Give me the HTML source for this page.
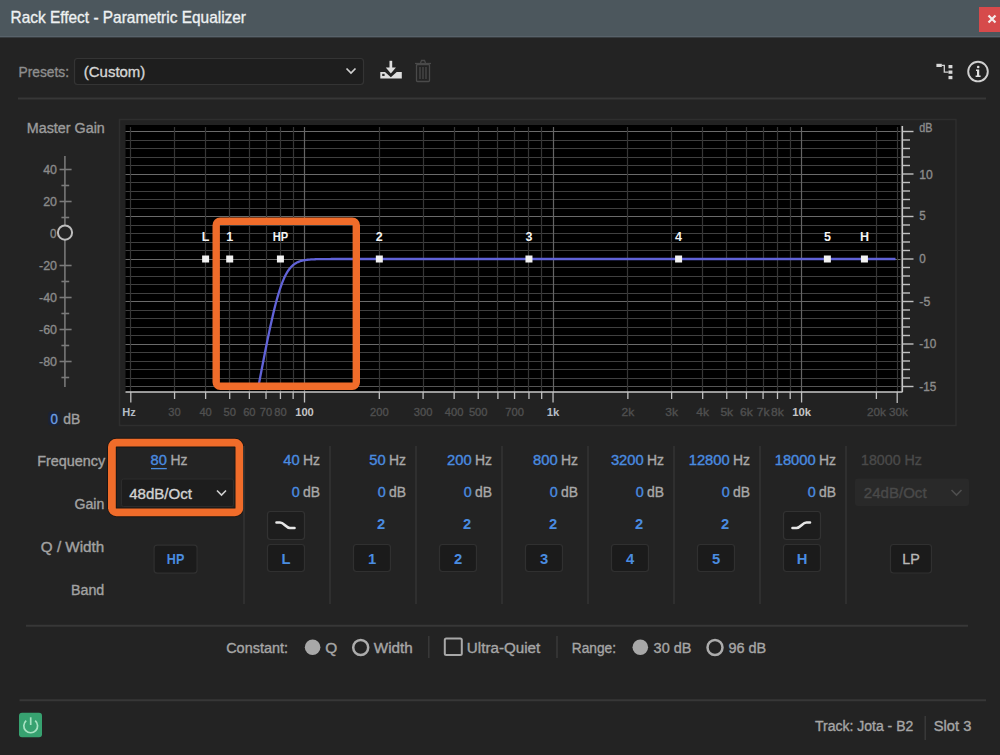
<!DOCTYPE html>
<html><head><meta charset="utf-8"><title>Rack Effect - Parametric Equalizer</title>
<style>
html,body{margin:0;padding:0;background:#232323;width:1000px;height:755px;overflow:hidden}
svg{display:block;font-family:"Liberation Sans", sans-serif}
</style></head><body>
<svg width="1000" height="755" viewBox="0 0 1000 755">
<rect width="1000" height="755" fill="#232323"/>
<rect x="0" y="0" width="1000" height="37.5" fill="#4c575d"/>
<line x1="0" y1="36.5" x2="1000" y2="36.5" stroke="#58626a" stroke-width="1.2"/>
<text x="10.5" y="23.4" font-size="17" fill="#eef1f2" stroke="#eef1f2" stroke-width="0.35" textLength="235.5" lengthAdjust="spacingAndGlyphs">Rack Effect - Parametric Equalizer</text>
<rect x="979" y="7" width="21" height="25" fill="#d64a4b"/>
<path d="M988.5 15.5 L995.5 22.5 M995.5 15.5 L988.5 22.5" stroke="#f4eaea" stroke-width="2.2"/>
<text x="18.5" y="76.7" font-size="15" fill="#8e8e8e" stroke="#8e8e8e" stroke-width="0.35" textLength="50.5" lengthAdjust="spacingAndGlyphs">Presets:</text>
<rect x="74.5" y="58.5" width="289" height="26" fill="#1e1e1e" stroke="#343434" stroke-width="1.2" rx="3"/>
<text x="83.8" y="76.7" font-size="15" fill="#d6d6d6" stroke="#d6d6d6" stroke-width="0.35" textLength="61.5" lengthAdjust="spacingAndGlyphs">(Custom)</text>
<path d="M346.5 68.5 L351 73 L355.5 68.5" stroke="#d0d0d0" stroke-width="1.7" fill="none"/>
<g fill="#dedede"><rect x="389.5" y="60.8" width="2.7" height="7.5"/><path d="M385.8 67.4 L395.9 67.4 L390.85 73.6Z"/><path d="M380.3 72 L385 72 L390.85 77.2 L396.7 72 L401.8 72 L401.8 78.6 L380.3 78.6Z"/></g><rect x="382.2" y="73.8" width="2.4" height="2.2" fill="#2a2a2a"/>
<g stroke="#4a4a4a" stroke-width="1.3" fill="none"><rect x="416.5" y="64.5" width="13" height="17" rx="1"/><line x1="415" y1="63.5" x2="431" y2="63.5"/><path d="M420.5 63 L421.5 60.5 L424.5 60.5 L425.5 63"/><line x1="420" y1="67" x2="420" y2="79"/><line x1="423" y1="67" x2="423" y2="79"/><line x1="426" y1="67" x2="426" y2="79"/></g>
<g fill="#d8d8d8"><rect x="936.4" y="63.8" width="5.4" height="3.2"/><rect x="948.5" y="65" width="3.9" height="3.3"/><rect x="948.5" y="70.5" width="3.9" height="3.3"/><rect x="948.5" y="75.9" width="3.9" height="3.3"/></g><path d="M941.5 65.4 L944.3 65.4 L944.3 72.1 L948.5 72.1" stroke="#d0d0d0" stroke-width="1.3" fill="none"/>
<circle cx="978" cy="71.6" r="9.8" stroke="#d0d0d0" stroke-width="1.9" fill="none"/><circle cx="978.2" cy="67" r="1.3" fill="#e0e0e0"/><path d="M976 69.5 L979.2 69.5 L979.2 75.5 L980.6 75.5 L980.6 77 L975.6 77 L975.6 75.5 L977 75.5 L977 71 L976 71Z" fill="#e0e0e0"/>
<line x1="18" y1="98.5" x2="986" y2="98.5" stroke="#373737" stroke-width="2"/>
<text x="26.8" y="133" font-size="14" fill="#9c9c9c" stroke="#9c9c9c" stroke-width="0.35" textLength="78" lengthAdjust="spacingAndGlyphs">Master Gain</text>
<line x1="64.9" y1="156" x2="64.9" y2="387" stroke="#6e6e6e" stroke-width="1.8"/>
<line x1="59.5" y1="169.5" x2="71.6" y2="169.5" stroke="#7a7a7a" stroke-width="1.6"/>
<text x="57" y="173.7" font-size="12.5" fill="#8a8a8a" stroke="#8a8a8a" stroke-width="0.35" text-anchor="end" textLength="13.8" lengthAdjust="spacingAndGlyphs">40</text>
<line x1="59.5" y1="201.5" x2="71.6" y2="201.5" stroke="#7a7a7a" stroke-width="1.6"/>
<text x="57" y="205.7" font-size="12.5" fill="#8a8a8a" stroke="#8a8a8a" stroke-width="0.35" text-anchor="end" textLength="13.8" lengthAdjust="spacingAndGlyphs">20</text>
<line x1="59.5" y1="265.5" x2="71.6" y2="265.5" stroke="#7a7a7a" stroke-width="1.6"/>
<text x="57" y="269.7" font-size="12.5" fill="#8a8a8a" stroke="#8a8a8a" stroke-width="0.35" text-anchor="end" textLength="18" lengthAdjust="spacingAndGlyphs">-20</text>
<line x1="59.5" y1="297.5" x2="71.6" y2="297.5" stroke="#7a7a7a" stroke-width="1.6"/>
<text x="57" y="301.7" font-size="12.5" fill="#8a8a8a" stroke="#8a8a8a" stroke-width="0.35" text-anchor="end" textLength="18" lengthAdjust="spacingAndGlyphs">-40</text>
<line x1="59.5" y1="329.5" x2="71.6" y2="329.5" stroke="#7a7a7a" stroke-width="1.6"/>
<text x="57" y="333.7" font-size="12.5" fill="#8a8a8a" stroke="#8a8a8a" stroke-width="0.35" text-anchor="end" textLength="18" lengthAdjust="spacingAndGlyphs">-60</text>
<line x1="59.5" y1="361.5" x2="71.6" y2="361.5" stroke="#7a7a7a" stroke-width="1.6"/>
<text x="57" y="365.7" font-size="12.5" fill="#8a8a8a" stroke="#8a8a8a" stroke-width="0.35" text-anchor="end" textLength="18" lengthAdjust="spacingAndGlyphs">-80</text>
<line x1="61.4" y1="185.5" x2="69.2" y2="185.5" stroke="#7a7a7a" stroke-width="1.6"/>
<line x1="61.4" y1="217.5" x2="69.2" y2="217.5" stroke="#7a7a7a" stroke-width="1.6"/>
<line x1="61.4" y1="281.5" x2="69.2" y2="281.5" stroke="#7a7a7a" stroke-width="1.6"/>
<line x1="61.4" y1="313.5" x2="69.2" y2="313.5" stroke="#7a7a7a" stroke-width="1.6"/>
<line x1="61.4" y1="345.5" x2="69.2" y2="345.5" stroke="#7a7a7a" stroke-width="1.6"/>
<line x1="61.4" y1="377.5" x2="69.2" y2="377.5" stroke="#7a7a7a" stroke-width="1.6"/>
<circle cx="65" cy="232.6" r="7.1" stroke="#bdbdbd" stroke-width="2" fill="#232323"/>
<text x="56.5" y="237.5" font-size="12.5" fill="#8a8a8a" stroke="#8a8a8a" stroke-width="0.35" text-anchor="end" textLength="6.5" lengthAdjust="spacingAndGlyphs">0</text>
<rect x="48" y="411" width="12.5" height="15" fill="#1b2233" rx="4"/>
<text x="50.4" y="424" font-size="14" fill="#6c9fe6" stroke="#6c9fe6" stroke-width="0.35" textLength="7.4" lengthAdjust="spacingAndGlyphs">0</text>
<text x="63.3" y="424" font-size="14" fill="#a0a0a0" stroke="#a0a0a0" stroke-width="0.35" textLength="17" lengthAdjust="spacingAndGlyphs">dB</text>
<rect x="119.5" y="119.5" width="836.5" height="306" fill="#222222" stroke="#2e2e2e" stroke-width="1.5"/>
<rect x="125.5" y="125" width="775" height="267" fill="#000000"/>
<line x1="125.5" y1="386.5" x2="900.5" y2="386.5" stroke="#555555" stroke-width="1.2"/>
<line x1="125.5" y1="378.5" x2="900.5" y2="378.5" stroke="#404040" stroke-width="1.2"/>
<line x1="125.5" y1="369.5" x2="900.5" y2="369.5" stroke="#404040" stroke-width="1.2"/>
<line x1="125.5" y1="361.5" x2="900.5" y2="361.5" stroke="#404040" stroke-width="1.2"/>
<line x1="125.5" y1="352.5" x2="900.5" y2="352.5" stroke="#404040" stroke-width="1.2"/>
<line x1="125.5" y1="344.5" x2="900.5" y2="344.5" stroke="#6a6a6a" stroke-width="1.2"/>
<line x1="125.5" y1="335.5" x2="900.5" y2="335.5" stroke="#404040" stroke-width="1.2"/>
<line x1="125.5" y1="327.5" x2="900.5" y2="327.5" stroke="#404040" stroke-width="1.2"/>
<line x1="125.5" y1="318.5" x2="900.5" y2="318.5" stroke="#404040" stroke-width="1.2"/>
<line x1="125.5" y1="310.5" x2="900.5" y2="310.5" stroke="#404040" stroke-width="1.2"/>
<line x1="125.5" y1="301.5" x2="900.5" y2="301.5" stroke="#6a6a6a" stroke-width="1.2"/>
<line x1="125.5" y1="293.5" x2="900.5" y2="293.5" stroke="#404040" stroke-width="1.2"/>
<line x1="125.5" y1="284.5" x2="900.5" y2="284.5" stroke="#404040" stroke-width="1.2"/>
<line x1="125.5" y1="276.5" x2="900.5" y2="276.5" stroke="#404040" stroke-width="1.2"/>
<line x1="125.5" y1="267.5" x2="900.5" y2="267.5" stroke="#404040" stroke-width="1.2"/>
<line x1="125.5" y1="259.5" x2="900.5" y2="259.5" stroke="#6a6a6a" stroke-width="1.2"/>
<line x1="125.5" y1="250.5" x2="900.5" y2="250.5" stroke="#404040" stroke-width="1.2"/>
<line x1="125.5" y1="242.5" x2="900.5" y2="242.5" stroke="#404040" stroke-width="1.2"/>
<line x1="125.5" y1="233.5" x2="900.5" y2="233.5" stroke="#404040" stroke-width="1.2"/>
<line x1="125.5" y1="225.5" x2="900.5" y2="225.5" stroke="#404040" stroke-width="1.2"/>
<line x1="125.5" y1="216.5" x2="900.5" y2="216.5" stroke="#6a6a6a" stroke-width="1.2"/>
<line x1="125.5" y1="208.5" x2="900.5" y2="208.5" stroke="#404040" stroke-width="1.2"/>
<line x1="125.5" y1="199.5" x2="900.5" y2="199.5" stroke="#404040" stroke-width="1.2"/>
<line x1="125.5" y1="191.5" x2="900.5" y2="191.5" stroke="#404040" stroke-width="1.2"/>
<line x1="125.5" y1="182.5" x2="900.5" y2="182.5" stroke="#404040" stroke-width="1.2"/>
<line x1="125.5" y1="174.5" x2="900.5" y2="174.5" stroke="#6a6a6a" stroke-width="1.2"/>
<line x1="125.5" y1="165.5" x2="900.5" y2="165.5" stroke="#404040" stroke-width="1.2"/>
<line x1="125.5" y1="157.5" x2="900.5" y2="157.5" stroke="#404040" stroke-width="1.2"/>
<line x1="125.5" y1="148.5" x2="900.5" y2="148.5" stroke="#404040" stroke-width="1.2"/>
<line x1="125.5" y1="140.5" x2="900.5" y2="140.5" stroke="#404040" stroke-width="1.2"/>
<line x1="125.5" y1="131.5" x2="900.5" y2="131.5" stroke="#6a6a6a" stroke-width="1.2"/>
<line x1="130.5" y1="127" x2="130.5" y2="392" stroke="#363636" stroke-width="1.2"/>
<line x1="174.5" y1="127" x2="174.5" y2="392" stroke="#363636" stroke-width="1.2"/>
<line x1="205.5" y1="127" x2="205.5" y2="392" stroke="#363636" stroke-width="1.2"/>
<line x1="229.5" y1="127" x2="229.5" y2="392" stroke="#363636" stroke-width="1.2"/>
<line x1="249.5" y1="127" x2="249.5" y2="392" stroke="#363636" stroke-width="1.2"/>
<line x1="266.5" y1="127" x2="266.5" y2="392" stroke="#363636" stroke-width="1.2"/>
<line x1="280.5" y1="127" x2="280.5" y2="392" stroke="#363636" stroke-width="1.2"/>
<line x1="293.5" y1="127" x2="293.5" y2="392" stroke="#363636" stroke-width="1.2"/>
<line x1="304.5" y1="127" x2="304.5" y2="392" stroke="#646464" stroke-width="1.2"/>
<line x1="379.5" y1="127" x2="379.5" y2="392" stroke="#363636" stroke-width="1.2"/>
<line x1="423.5" y1="127" x2="423.5" y2="392" stroke="#363636" stroke-width="1.2"/>
<line x1="454.5" y1="127" x2="454.5" y2="392" stroke="#363636" stroke-width="1.2"/>
<line x1="478.5" y1="127" x2="478.5" y2="392" stroke="#363636" stroke-width="1.2"/>
<line x1="497.5" y1="127" x2="497.5" y2="392" stroke="#363636" stroke-width="1.2"/>
<line x1="514.5" y1="127" x2="514.5" y2="392" stroke="#363636" stroke-width="1.2"/>
<line x1="528.5" y1="127" x2="528.5" y2="392" stroke="#363636" stroke-width="1.2"/>
<line x1="541.5" y1="127" x2="541.5" y2="392" stroke="#363636" stroke-width="1.2"/>
<line x1="553.5" y1="127" x2="553.5" y2="392" stroke="#646464" stroke-width="1.2"/>
<line x1="627.5" y1="127" x2="627.5" y2="392" stroke="#363636" stroke-width="1.2"/>
<line x1="671.5" y1="127" x2="671.5" y2="392" stroke="#363636" stroke-width="1.2"/>
<line x1="702.5" y1="127" x2="702.5" y2="392" stroke="#363636" stroke-width="1.2"/>
<line x1="726.5" y1="127" x2="726.5" y2="392" stroke="#363636" stroke-width="1.2"/>
<line x1="746.5" y1="127" x2="746.5" y2="392" stroke="#363636" stroke-width="1.2"/>
<line x1="763.5" y1="127" x2="763.5" y2="392" stroke="#363636" stroke-width="1.2"/>
<line x1="777.5" y1="127" x2="777.5" y2="392" stroke="#363636" stroke-width="1.2"/>
<line x1="790.5" y1="127" x2="790.5" y2="392" stroke="#363636" stroke-width="1.2"/>
<line x1="801.5" y1="127" x2="801.5" y2="392" stroke="#646464" stroke-width="1.2"/>
<line x1="876.5" y1="127" x2="876.5" y2="392" stroke="#363636" stroke-width="1.2"/>
<line x1="897.5" y1="127" x2="897.5" y2="392" stroke="#363636" stroke-width="1.2"/>
<line x1="125.5" y1="392" x2="902.5" y2="392" stroke="#c8c8c8" stroke-width="1.6"/>
<line x1="130.8" y1="392" x2="130.8" y2="402.5" stroke="#c0c0c0" stroke-width="1.3"/>
<line x1="174.56396061310846" y1="392" x2="174.56396061310846" y2="399" stroke="#c0c0c0" stroke-width="1.3"/>
<line x1="205.61498482236925" y1="392" x2="205.61498482236925" y2="399" stroke="#c0c0c0" stroke-width="1.3"/>
<line x1="229.7000303552615" y1="392" x2="229.7000303552615" y2="399" stroke="#c0c0c0" stroke-width="1.3"/>
<line x1="249.3789454354777" y1="392" x2="249.3789454354777" y2="399" stroke="#c0c0c0" stroke-width="1.3"/>
<line x1="266.01723106237404" y1="392" x2="266.01723106237404" y2="399" stroke="#c0c0c0" stroke-width="1.3"/>
<line x1="280.42996964473855" y1="392" x2="280.42996964473855" y2="399" stroke="#c0c0c0" stroke-width="1.3"/>
<line x1="293.14290604858616" y1="392" x2="293.14290604858616" y2="399" stroke="#c0c0c0" stroke-width="1.3"/>
<line x1="304.51501517763074" y1="392" x2="304.51501517763074" y2="402.5" stroke="#c0c0c0" stroke-width="1.3"/>
<line x1="379.33000000000004" y1="392" x2="379.33000000000004" y2="399" stroke="#c0c0c0" stroke-width="1.3"/>
<line x1="423.0939606131085" y1="392" x2="423.0939606131085" y2="399" stroke="#c0c0c0" stroke-width="1.3"/>
<line x1="454.1449848223693" y1="392" x2="454.1449848223693" y2="399" stroke="#c0c0c0" stroke-width="1.3"/>
<line x1="478.23003035526153" y1="392" x2="478.23003035526153" y2="399" stroke="#c0c0c0" stroke-width="1.3"/>
<line x1="497.9089454354777" y1="392" x2="497.9089454354777" y2="399" stroke="#c0c0c0" stroke-width="1.3"/>
<line x1="514.5472310623741" y1="392" x2="514.5472310623741" y2="399" stroke="#c0c0c0" stroke-width="1.3"/>
<line x1="528.9599696447385" y1="392" x2="528.9599696447385" y2="399" stroke="#c0c0c0" stroke-width="1.3"/>
<line x1="541.6729060485861" y1="392" x2="541.6729060485861" y2="399" stroke="#c0c0c0" stroke-width="1.3"/>
<line x1="553.0450151776308" y1="392" x2="553.0450151776308" y2="402.5" stroke="#c0c0c0" stroke-width="1.3"/>
<line x1="627.86" y1="392" x2="627.86" y2="399" stroke="#c0c0c0" stroke-width="1.3"/>
<line x1="671.6239606131085" y1="392" x2="671.6239606131085" y2="399" stroke="#c0c0c0" stroke-width="1.3"/>
<line x1="702.6749848223692" y1="392" x2="702.6749848223692" y2="399" stroke="#c0c0c0" stroke-width="1.3"/>
<line x1="726.7600303552615" y1="392" x2="726.7600303552615" y2="399" stroke="#c0c0c0" stroke-width="1.3"/>
<line x1="746.4389454354778" y1="392" x2="746.4389454354778" y2="399" stroke="#c0c0c0" stroke-width="1.3"/>
<line x1="763.077231062374" y1="392" x2="763.077231062374" y2="399" stroke="#c0c0c0" stroke-width="1.3"/>
<line x1="777.4899696447385" y1="392" x2="777.4899696447385" y2="399" stroke="#c0c0c0" stroke-width="1.3"/>
<line x1="790.2029060485861" y1="392" x2="790.2029060485861" y2="399" stroke="#c0c0c0" stroke-width="1.3"/>
<line x1="801.5750151776308" y1="392" x2="801.5750151776308" y2="402.5" stroke="#c0c0c0" stroke-width="1.3"/>
<line x1="876.3900000000001" y1="392" x2="876.3900000000001" y2="399" stroke="#c0c0c0" stroke-width="1.3"/>
<line x1="897.2" y1="392" x2="897.2" y2="403" stroke="#c0c0c0" stroke-width="1.3"/>
<line x1="902.3" y1="126" x2="902.3" y2="392" stroke="#c8c8c8" stroke-width="1.6"/>
<line x1="902.3" y1="386.5" x2="913.5" y2="386.5" stroke="#c0c0c0" stroke-width="1.4"/>
<line x1="902.3" y1="378.0" x2="910" y2="378.0" stroke="#c0c0c0" stroke-width="1.4"/>
<line x1="902.3" y1="369.5" x2="910" y2="369.5" stroke="#c0c0c0" stroke-width="1.4"/>
<line x1="902.3" y1="361.0" x2="910" y2="361.0" stroke="#c0c0c0" stroke-width="1.4"/>
<line x1="902.3" y1="352.5" x2="910" y2="352.5" stroke="#c0c0c0" stroke-width="1.4"/>
<line x1="902.3" y1="344.0" x2="913.5" y2="344.0" stroke="#c0c0c0" stroke-width="1.4"/>
<line x1="902.3" y1="335.5" x2="910" y2="335.5" stroke="#c0c0c0" stroke-width="1.4"/>
<line x1="902.3" y1="327.0" x2="910" y2="327.0" stroke="#c0c0c0" stroke-width="1.4"/>
<line x1="902.3" y1="318.5" x2="910" y2="318.5" stroke="#c0c0c0" stroke-width="1.4"/>
<line x1="902.3" y1="310.0" x2="910" y2="310.0" stroke="#c0c0c0" stroke-width="1.4"/>
<line x1="902.3" y1="301.5" x2="913.5" y2="301.5" stroke="#c0c0c0" stroke-width="1.4"/>
<line x1="902.3" y1="293.0" x2="910" y2="293.0" stroke="#c0c0c0" stroke-width="1.4"/>
<line x1="902.3" y1="284.5" x2="910" y2="284.5" stroke="#c0c0c0" stroke-width="1.4"/>
<line x1="902.3" y1="276.0" x2="910" y2="276.0" stroke="#c0c0c0" stroke-width="1.4"/>
<line x1="902.3" y1="267.5" x2="910" y2="267.5" stroke="#c0c0c0" stroke-width="1.4"/>
<line x1="902.3" y1="259.0" x2="913.5" y2="259.0" stroke="#c0c0c0" stroke-width="1.4"/>
<line x1="902.3" y1="250.5" x2="910" y2="250.5" stroke="#c0c0c0" stroke-width="1.4"/>
<line x1="902.3" y1="242.0" x2="910" y2="242.0" stroke="#c0c0c0" stroke-width="1.4"/>
<line x1="902.3" y1="233.5" x2="910" y2="233.5" stroke="#c0c0c0" stroke-width="1.4"/>
<line x1="902.3" y1="225.0" x2="910" y2="225.0" stroke="#c0c0c0" stroke-width="1.4"/>
<line x1="902.3" y1="216.5" x2="913.5" y2="216.5" stroke="#c0c0c0" stroke-width="1.4"/>
<line x1="902.3" y1="208.0" x2="910" y2="208.0" stroke="#c0c0c0" stroke-width="1.4"/>
<line x1="902.3" y1="199.5" x2="910" y2="199.5" stroke="#c0c0c0" stroke-width="1.4"/>
<line x1="902.3" y1="191.0" x2="910" y2="191.0" stroke="#c0c0c0" stroke-width="1.4"/>
<line x1="902.3" y1="182.5" x2="910" y2="182.5" stroke="#c0c0c0" stroke-width="1.4"/>
<line x1="902.3" y1="174.0" x2="913.5" y2="174.0" stroke="#c0c0c0" stroke-width="1.4"/>
<line x1="902.3" y1="165.5" x2="910" y2="165.5" stroke="#c0c0c0" stroke-width="1.4"/>
<line x1="902.3" y1="157.0" x2="910" y2="157.0" stroke="#c0c0c0" stroke-width="1.4"/>
<line x1="902.3" y1="148.5" x2="910" y2="148.5" stroke="#c0c0c0" stroke-width="1.4"/>
<line x1="902.3" y1="140.0" x2="910" y2="140.0" stroke="#c0c0c0" stroke-width="1.4"/>
<line x1="902.3" y1="131.5" x2="913.5" y2="131.5" stroke="#c0c0c0" stroke-width="1.4"/>
<text x="919.3" y="131.7" font-size="12" fill="#8c8c8c" stroke="#8c8c8c" stroke-width="0.35" textLength="13.2" lengthAdjust="spacingAndGlyphs">dB</text>
<text x="919.3" y="179" font-size="12" fill="#8c8c8c" stroke="#8c8c8c" stroke-width="0.35" textLength="13.5" lengthAdjust="spacingAndGlyphs">10</text>
<text x="919.3" y="220.2" font-size="12" fill="#8c8c8c" stroke="#8c8c8c" stroke-width="0.35" textLength="6.5" lengthAdjust="spacingAndGlyphs">5</text>
<text x="919.3" y="263.4" font-size="12" fill="#8c8c8c" stroke="#8c8c8c" stroke-width="0.35" textLength="6.5" lengthAdjust="spacingAndGlyphs">0</text>
<text x="919.3" y="306.4" font-size="12" fill="#8c8c8c" stroke="#8c8c8c" stroke-width="0.35" textLength="11" lengthAdjust="spacingAndGlyphs">-5</text>
<text x="919.3" y="348" font-size="12" fill="#8c8c8c" stroke="#8c8c8c" stroke-width="0.35" textLength="17" lengthAdjust="spacingAndGlyphs">-10</text>
<text x="919.3" y="391.2" font-size="12" fill="#8c8c8c" stroke="#8c8c8c" stroke-width="0.35" textLength="17" lengthAdjust="spacingAndGlyphs">-15</text>
<text x="129" y="416.3" font-size="11.5" fill="#b4bcc6" text-anchor="middle" textLength="13.5" lengthAdjust="spacingAndGlyphs" font-weight="bold">Hz</text>
<text x="174.56" y="416.3" font-size="11.5" fill="#505050" stroke="#505050" stroke-width="0.35" text-anchor="middle" textLength="12.4" lengthAdjust="spacingAndGlyphs">30</text>
<text x="205.61" y="416.3" font-size="11.5" fill="#505050" stroke="#505050" stroke-width="0.35" text-anchor="middle" textLength="12.4" lengthAdjust="spacingAndGlyphs">40</text>
<text x="229.7" y="416.3" font-size="11.5" fill="#505050" stroke="#505050" stroke-width="0.35" text-anchor="middle" textLength="12.4" lengthAdjust="spacingAndGlyphs">50</text>
<text x="249.38" y="416.3" font-size="11.5" fill="#505050" stroke="#505050" stroke-width="0.35" text-anchor="middle" textLength="12.4" lengthAdjust="spacingAndGlyphs">60</text>
<text x="266.02" y="416.3" font-size="11.5" fill="#505050" stroke="#505050" stroke-width="0.35" text-anchor="middle" textLength="12.4" lengthAdjust="spacingAndGlyphs">70</text>
<text x="280.43" y="416.3" font-size="11.5" fill="#505050" stroke="#505050" stroke-width="0.35" text-anchor="middle" textLength="12.4" lengthAdjust="spacingAndGlyphs">80</text>
<text x="304.52" y="416.3" font-size="11.5" fill="#c4c4c4" text-anchor="middle" textLength="18.6" lengthAdjust="spacingAndGlyphs" font-weight="bold">100</text>
<text x="379.33" y="416.3" font-size="11.5" fill="#505050" stroke="#505050" stroke-width="0.35" text-anchor="middle" textLength="18.6" lengthAdjust="spacingAndGlyphs">200</text>
<text x="423.09" y="416.3" font-size="11.5" fill="#505050" stroke="#505050" stroke-width="0.35" text-anchor="middle" textLength="18.6" lengthAdjust="spacingAndGlyphs">300</text>
<text x="454.14" y="416.3" font-size="11.5" fill="#505050" stroke="#505050" stroke-width="0.35" text-anchor="middle" textLength="18.6" lengthAdjust="spacingAndGlyphs">400</text>
<text x="478.23" y="416.3" font-size="11.5" fill="#505050" stroke="#505050" stroke-width="0.35" text-anchor="middle" textLength="18.6" lengthAdjust="spacingAndGlyphs">500</text>
<text x="514.55" y="416.3" font-size="11.5" fill="#505050" stroke="#505050" stroke-width="0.35" text-anchor="middle" textLength="18.6" lengthAdjust="spacingAndGlyphs">700</text>
<text x="553.05" y="416.3" font-size="11.5" fill="#b4bcc6" text-anchor="middle" textLength="12.7" lengthAdjust="spacingAndGlyphs" font-weight="bold">1k</text>
<text x="627.86" y="416.3" font-size="11.5" fill="#505050" stroke="#505050" stroke-width="0.35" text-anchor="middle" textLength="12.7" lengthAdjust="spacingAndGlyphs">2k</text>
<text x="671.62" y="416.3" font-size="11.5" fill="#505050" stroke="#505050" stroke-width="0.35" text-anchor="middle" textLength="12.7" lengthAdjust="spacingAndGlyphs">3k</text>
<text x="702.67" y="416.3" font-size="11.5" fill="#505050" stroke="#505050" stroke-width="0.35" text-anchor="middle" textLength="12.7" lengthAdjust="spacingAndGlyphs">4k</text>
<text x="726.76" y="416.3" font-size="11.5" fill="#505050" stroke="#505050" stroke-width="0.35" text-anchor="middle" textLength="12.7" lengthAdjust="spacingAndGlyphs">5k</text>
<text x="746.44" y="416.3" font-size="11.5" fill="#505050" stroke="#505050" stroke-width="0.35" text-anchor="middle" textLength="12.7" lengthAdjust="spacingAndGlyphs">6k</text>
<text x="763.08" y="416.3" font-size="11.5" fill="#505050" stroke="#505050" stroke-width="0.35" text-anchor="middle" textLength="12.7" lengthAdjust="spacingAndGlyphs">7k</text>
<text x="777.49" y="416.3" font-size="11.5" fill="#505050" stroke="#505050" stroke-width="0.35" text-anchor="middle" textLength="12.7" lengthAdjust="spacingAndGlyphs">8k</text>
<text x="801.58" y="416.3" font-size="11.5" fill="#c4c4c4" text-anchor="middle" textLength="18.9" lengthAdjust="spacingAndGlyphs" font-weight="bold">10k</text>
<text x="876.39" y="416.3" font-size="11.5" fill="#505050" stroke="#505050" stroke-width="0.35" text-anchor="middle" textLength="18.9" lengthAdjust="spacingAndGlyphs">20k</text>
<text x="898.5" y="416.3" font-size="11.5" fill="#505050" stroke="#505050" stroke-width="0.35" text-anchor="middle" textLength="18.9" lengthAdjust="spacingAndGlyphs">30k</text>
<path d="M258.25 387.43 L259.32 381.75 L260.39 376.10 L261.47 370.49 L262.54 364.92 L263.62 359.41 L264.69 353.95 L265.76 348.55 L266.84 343.23 L267.91 338.00 L268.99 332.87 L270.06 327.84 L271.13 322.94 L272.21 318.17 L273.28 313.56 L274.36 309.10 L275.43 304.83 L276.50 300.75 L277.58 296.87 L278.65 293.21 L279.73 289.77 L280.80 286.57 L281.87 283.59 L282.95 280.85 L284.02 278.34 L285.09 276.05 L286.17 273.99 L287.24 272.13 L288.32 270.47 L289.39 268.99 L290.46 267.68 L291.54 266.52 L292.61 265.50 L293.69 264.62 L294.76 263.84 L295.83 263.17 L296.91 262.58 L297.98 262.08 L299.06 261.64 L300.13 261.26 L301.20 260.94 L302.28 260.66 L303.35 260.42 L304.43 260.21 L305.50 260.04 L306.57 259.89 L307.65 259.76 L308.72 259.65 L309.80 259.55 L310.87 259.47 L311.94 259.40 L313.02 259.34 L314.09 259.29 L315.17 259.25 L316.24 259.21 L317.31 259.18 L318.39 259.16 L319.46 259.13 L320.54 259.11 L321.61 259.10 L322.68 259.08 L323.76 259.07 L324.83 259.06 L325.91 259.05 L326.98 259.04 L328.05 259.04 L329.13 259.03 L330.20 259.03 L331.28 259.02 L332.35 259.02 L333.42 259.02 L334.50 259.01 L335.57 259.01 L336.65 259.01 L337.72 259.01 L338.79 259.01 L339.87 259.01 L340.94 259.01 L342.02 259.00 L343.09 259.00 L344.16 259.00 L345.24 259.00 L346.31 259.00 L347.39 259.00 L348.46 259.00 L349.53 259.00 L350.61 259.00 L351.68 259.00 L352.76 259.00 L353.83 259.00 L354.90 259.00 L355.98 259.00 L357.05 259.00 L358.13 259.00 L359.20 259.00 L360.27 259.00 L361.35 259.00 L362.42 259.00 L363.50 259.00 L364.57 259.00 L365.64 259.00 L366.72 259.00 L367.79 259.00 L368.87 259.00 L369.94 259.00 L371.01 259.00 L372.09 259.00 L373.16 259.00 L374.24 259.00 L375.31 259.00 L376.38 259.00 L377.46 259.00 L378.53 259.00 L379.61 259.00 L380.68 259.00 L381.75 259.00 L382.83 259.00 L383.90 259.00 L384.98 259.00 L386.05 259.00 L387.12 259.00 L388.20 259.00 L389.27 259.00 L390.35 259.00 L391.42 259.00 L392.49 259.00 L393.57 259.00 L394.64 259.00 L395.72 259.00 L396.79 259.00 L397.86 259.00 L398.94 259.00 L400.01 259.00 L401.09 259.00 L402.16 259.00 L403.23 259.00 L404.31 259.00 L405.38 259.00 L406.46 259.00 L407.53 259.00 L408.60 259.00 L409.68 259.00 L410.75 259.00 L411.83 259.00 L412.90 259.00 L413.97 259.00 L415.05 259.00 L416.12 259.00 L417.20 259.00 L418.27 259.00 L419.34 259.00 L420.42 259.00 L421.49 259.00 L422.57 259.00 L423.64 259.00 L424.71 259.00 L425.79 259.00 L426.86 259.00 L427.94 259.00 L429.01 259.00 L430.08 259.00 L431.16 259.00 L432.23 259.00 L433.31 259.00 L434.38 259.00 L435.45 259.00 L436.53 259.00 L437.60 259.00 L438.68 259.00 L439.75 259.00 L440.82 259.00 L441.90 259.00 L442.97 259.00 L444.05 259.00 L445.12 259.00 L446.19 259.00 L447.27 259.00 L448.34 259.00 L449.42 259.00 L450.49 259.00 L451.56 259.00 L452.64 259.00 L453.71 259.00 L454.79 259.00 L455.86 259.00 L456.93 259.00 L458.01 259.00 L459.08 259.00 L460.16 259.00 L461.23 259.00 L462.30 259.00 L463.38 259.00 L464.45 259.00 L465.53 259.00 L466.60 259.00 L467.67 259.00 L468.75 259.00 L469.82 259.00 L470.90 259.00 L471.97 259.00 L473.04 259.00 L474.12 259.00 L475.19 259.00 L476.27 259.00 L477.34 259.00 L478.41 259.00 L479.49 259.00 L480.56 259.00 L481.64 259.00 L482.71 259.00 L483.78 259.00 L484.86 259.00 L485.93 259.00 L487.01 259.00 L488.08 259.00 L489.15 259.00 L490.23 259.00 L491.30 259.00 L492.38 259.00 L493.45 259.00 L494.52 259.00 L495.60 259.00 L496.67 259.00 L497.75 259.00 L498.82 259.00 L499.89 259.00 L500.97 259.00 L502.04 259.00 L503.12 259.00 L504.19 259.00 L505.26 259.00 L506.34 259.00 L507.41 259.00 L508.49 259.00 L509.56 259.00 L510.63 259.00 L511.71 259.00 L512.78 259.00 L513.86 259.00 L514.93 259.00 L516.00 259.00 L517.08 259.00 L518.15 259.00 L519.23 259.00 L520.30 259.00 L521.37 259.00 L522.45 259.00 L523.52 259.00 L524.59 259.00 L525.67 259.00 L526.74 259.00 L527.82 259.00 L528.89 259.00 L529.96 259.00 L531.04 259.00 L532.11 259.00 L533.19 259.00 L534.26 259.00 L535.33 259.00 L536.41 259.00 L537.48 259.00 L538.56 259.00 L539.63 259.00 L540.70 259.00 L541.78 259.00 L542.85 259.00 L543.93 259.00 L545.00 259.00 L546.07 259.00 L547.15 259.00 L548.22 259.00 L549.30 259.00 L550.37 259.00 L551.44 259.00 L552.52 259.00 L553.59 259.00 L554.67 259.00 L555.74 259.00 L556.81 259.00 L557.89 259.00 L558.96 259.00 L560.04 259.00 L561.11 259.00 L562.18 259.00 L563.26 259.00 L564.33 259.00 L565.41 259.00 L566.48 259.00 L567.55 259.00 L568.63 259.00 L569.70 259.00 L570.78 259.00 L571.85 259.00 L572.92 259.00 L574.00 259.00 L575.07 259.00 L576.15 259.00 L577.22 259.00 L578.29 259.00 L579.37 259.00 L580.44 259.00 L581.52 259.00 L582.59 259.00 L583.66 259.00 L584.74 259.00 L585.81 259.00 L586.89 259.00 L587.96 259.00 L589.03 259.00 L590.11 259.00 L591.18 259.00 L592.26 259.00 L593.33 259.00 L594.40 259.00 L595.48 259.00 L596.55 259.00 L597.63 259.00 L598.70 259.00 L599.77 259.00 L600.85 259.00 L601.92 259.00 L603.00 259.00 L604.07 259.00 L605.14 259.00 L606.22 259.00 L607.29 259.00 L608.37 259.00 L609.44 259.00 L610.51 259.00 L611.59 259.00 L612.66 259.00 L613.74 259.00 L614.81 259.00 L615.88 259.00 L616.96 259.00 L618.03 259.00 L619.11 259.00 L620.18 259.00 L621.25 259.00 L622.33 259.00 L623.40 259.00 L624.48 259.00 L625.55 259.00 L626.62 259.00 L627.70 259.00 L628.77 259.00 L629.85 259.00 L630.92 259.00 L631.99 259.00 L633.07 259.00 L634.14 259.00 L635.22 259.00 L636.29 259.00 L637.36 259.00 L638.44 259.00 L639.51 259.00 L640.59 259.00 L641.66 259.00 L642.73 259.00 L643.81 259.00 L644.88 259.00 L645.96 259.00 L647.03 259.00 L648.10 259.00 L649.18 259.00 L650.25 259.00 L651.33 259.00 L652.40 259.00 L653.47 259.00 L654.55 259.00 L655.62 259.00 L656.70 259.00 L657.77 259.00 L658.84 259.00 L659.92 259.00 L660.99 259.00 L662.07 259.00 L663.14 259.00 L664.21 259.00 L665.29 259.00 L666.36 259.00 L667.44 259.00 L668.51 259.00 L669.58 259.00 L670.66 259.00 L671.73 259.00 L672.81 259.00 L673.88 259.00 L674.95 259.00 L676.03 259.00 L677.10 259.00 L678.18 259.00 L679.25 259.00 L680.32 259.00 L681.40 259.00 L682.47 259.00 L683.55 259.00 L684.62 259.00 L685.69 259.00 L686.77 259.00 L687.84 259.00 L688.92 259.00 L689.99 259.00 L691.06 259.00 L692.14 259.00 L693.21 259.00 L694.29 259.00 L695.36 259.00 L696.43 259.00 L697.51 259.00 L698.58 259.00 L699.66 259.00 L700.73 259.00 L701.80 259.00 L702.88 259.00 L703.95 259.00 L705.03 259.00 L706.10 259.00 L707.17 259.00 L708.25 259.00 L709.32 259.00 L710.40 259.00 L711.47 259.00 L712.54 259.00 L713.62 259.00 L714.69 259.00 L715.77 259.00 L716.84 259.00 L717.91 259.00 L718.99 259.00 L720.06 259.00 L721.14 259.00 L722.21 259.00 L723.28 259.00 L724.36 259.00 L725.43 259.00 L726.51 259.00 L727.58 259.00 L728.65 259.00 L729.73 259.00 L730.80 259.00 L731.88 259.00 L732.95 259.00 L734.02 259.00 L735.10 259.00 L736.17 259.00 L737.25 259.00 L738.32 259.00 L739.39 259.00 L740.47 259.00 L741.54 259.00 L742.62 259.00 L743.69 259.00 L744.76 259.00 L745.84 259.00 L746.91 259.00 L747.99 259.00 L749.06 259.00 L750.13 259.00 L751.21 259.00 L752.28 259.00 L753.36 259.00 L754.43 259.00 L755.50 259.00 L756.58 259.00 L757.65 259.00 L758.73 259.00 L759.80 259.00 L760.87 259.00 L761.95 259.00 L763.02 259.00 L764.09 259.00 L765.17 259.00 L766.24 259.00 L767.32 259.00 L768.39 259.00 L769.46 259.00 L770.54 259.00 L771.61 259.00 L772.69 259.00 L773.76 259.00 L774.83 259.00 L775.91 259.00 L776.98 259.00 L778.06 259.00 L779.13 259.00 L780.20 259.00 L781.28 259.00 L782.35 259.00 L783.43 259.00 L784.50 259.00 L785.57 259.00 L786.65 259.00 L787.72 259.00 L788.80 259.00 L789.87 259.00 L790.94 259.00 L792.02 259.00 L793.09 259.00 L794.17 259.00 L795.24 259.00 L796.31 259.00 L797.39 259.00 L798.46 259.00 L799.54 259.00 L800.61 259.00 L801.68 259.00 L802.76 259.00 L803.83 259.00 L804.91 259.00 L805.98 259.00 L807.05 259.00 L808.13 259.00 L809.20 259.00 L810.28 259.00 L811.35 259.00 L812.42 259.00 L813.50 259.00 L814.57 259.00 L815.65 259.00 L816.72 259.00 L817.79 259.00 L818.87 259.00 L819.94 259.00 L821.02 259.00 L822.09 259.00 L823.16 259.00 L824.24 259.00 L825.31 259.00 L826.39 259.00 L827.46 259.00 L828.53 259.00 L829.61 259.00 L830.68 259.00 L831.76 259.00 L832.83 259.00 L833.90 259.00 L834.98 259.00 L836.05 259.00 L837.13 259.00 L838.20 259.00 L839.27 259.00 L840.35 259.00 L841.42 259.00 L842.50 259.00 L843.57 259.00 L844.64 259.00 L845.72 259.00 L846.79 259.00 L847.87 259.00 L848.94 259.00 L850.01 259.00 L851.09 259.00 L852.16 259.00 L853.24 259.00 L854.31 259.00 L855.38 259.00 L856.46 259.00 L857.53 259.00 L858.61 259.00 L859.68 259.00 L860.75 259.00 L861.83 259.00 L862.90 259.00 L863.98 259.00 L865.05 259.00 L866.12 259.00 L867.20 259.00 L868.27 259.00 L869.35 259.00 L870.42 259.00 L871.49 259.00 L872.57 259.00 L873.64 259.00 L874.72 259.00 L875.79 259.00 L876.86 259.00 L877.94 259.00 L879.01 259.00 L880.09 259.00 L881.16 259.00 L895.50 259.00" stroke="#6163d8" stroke-width="2.3" fill="none" stroke-linejoin="round"/>
<rect x="202.11" y="255.5" width="7" height="7" fill="#f2f2f2"/>
<text x="205.61" y="240.6" font-size="12.5" fill="#f4f4f4" text-anchor="middle" font-weight="bold">L</text>
<rect x="226.2" y="255.5" width="7" height="7" fill="#f2f2f2"/>
<text x="229.7" y="240.6" font-size="12.5" fill="#f4f4f4" text-anchor="middle" font-weight="bold">1</text>
<rect x="276.93" y="255.5" width="7" height="7" fill="#f2f2f2"/>
<text x="280.43" y="240.6" font-size="12.5" fill="#f4f4f4" text-anchor="middle" textLength="15.5" lengthAdjust="spacingAndGlyphs" font-weight="bold">HP</text>
<rect x="375.83" y="255.5" width="7" height="7" fill="#f2f2f2"/>
<text x="379.33" y="240.6" font-size="12.5" fill="#f4f4f4" text-anchor="middle" font-weight="bold">2</text>
<rect x="525.46" y="255.5" width="7" height="7" fill="#f2f2f2"/>
<text x="528.96" y="240.6" font-size="12.5" fill="#f4f4f4" text-anchor="middle" font-weight="bold">3</text>
<rect x="675.09" y="255.5" width="7" height="7" fill="#f2f2f2"/>
<text x="678.59" y="240.6" font-size="12.5" fill="#f4f4f4" text-anchor="middle" font-weight="bold">4</text>
<rect x="823.87" y="255.5" width="7" height="7" fill="#f2f2f2"/>
<text x="827.37" y="240.6" font-size="12.5" fill="#f4f4f4" text-anchor="middle" font-weight="bold">5</text>
<rect x="860.92" y="255.5" width="7" height="7" fill="#f2f2f2"/>
<text x="864.42" y="240.6" font-size="12.5" fill="#f4f4f4" text-anchor="middle" font-weight="bold">H</text>
<rect x="216.2" y="221.2" width="140.1" height="165.1" fill="none" stroke="#f06c2a" stroke-width="7.4" rx="4"/>
<text x="37.2" y="466" font-size="14" fill="#a2a2a2" stroke="#a2a2a2" stroke-width="0.35" textLength="68" lengthAdjust="spacingAndGlyphs">Frequency</text>
<text x="74.5" y="508.6" font-size="14" fill="#a2a2a2" stroke="#a2a2a2" stroke-width="0.35" textLength="29.8" lengthAdjust="spacingAndGlyphs">Gain</text>
<text x="40.8" y="551.8" font-size="14" fill="#a2a2a2" stroke="#a2a2a2" stroke-width="0.35" textLength="63.5" lengthAdjust="spacingAndGlyphs">Q / Width</text>
<text x="71" y="594.5" font-size="14" fill="#a2a2a2" stroke="#a2a2a2" stroke-width="0.35" textLength="33.3" lengthAdjust="spacingAndGlyphs">Band</text>
<text x="150.5" y="465" font-size="14" fill="#4a8ce0" stroke="#4a8ce0" stroke-width="0.35" textLength="16.3" lengthAdjust="spacingAndGlyphs">80</text>
<line x1="151" y1="468.6" x2="166.8" y2="468.6" stroke="#4a8ce0" stroke-width="1.3"/>
<text x="170.4" y="465" font-size="14" fill="#a8a8a8" stroke="#a8a8a8" stroke-width="0.35" textLength="17" lengthAdjust="spacingAndGlyphs">Hz</text>
<rect x="121.5" y="479" width="112" height="27.5" fill="#1d1d1d" stroke="#2c2c2c" stroke-width="1" rx="2"/>
<text x="129.2" y="498.7" font-size="14" fill="#d2d2d2" stroke="#d2d2d2" stroke-width="0.35" textLength="62.8" lengthAdjust="spacingAndGlyphs">48dB/Oct</text>
<path d="M217 490.5 L221.5 495 L226 490.5" stroke="#d0d0d0" stroke-width="1.6" fill="none"/>
<rect x="154.1" y="545.1" width="43" height="28" fill="#1b1b1b" stroke="#303030" stroke-width="1.2" rx="3"/>
<text x="175.6" y="564.3000000000001" font-size="14.8" fill="#4a8ce0" text-anchor="middle" textLength="17.5" lengthAdjust="spacingAndGlyphs" font-weight="bold">HP</text>
<rect x="111.9" y="442.6" width="127.5" height="69.8" fill="none" stroke="#140a04" stroke-width="9.6" rx="5" opacity="0.55"/>
<rect x="111.9" y="442.6" width="127.5" height="69.8" fill="none" stroke="#f06c2a" stroke-width="7.8" rx="4.5"/>
<line x1="244" y1="446" x2="244" y2="604" stroke="#343434" stroke-width="1.5"/>
<text x="303" y="464.7" font-size="14" fill="#a8a8a8" stroke="#a8a8a8" stroke-width="0.35" textLength="17" lengthAdjust="spacingAndGlyphs">Hz</text>
<text x="283.3" y="464.7" font-size="14" fill="#4a8ce0" stroke="#4a8ce0" stroke-width="0.35" textLength="16.4" lengthAdjust="spacingAndGlyphs">40</text>
<text x="303" y="496.9" font-size="14" fill="#a8a8a8" stroke="#a8a8a8" stroke-width="0.35" textLength="17" lengthAdjust="spacingAndGlyphs">dB</text>
<text x="291.7" y="496.9" font-size="14" fill="#4a8ce0" stroke="#4a8ce0" stroke-width="0.35" textLength="8" lengthAdjust="spacingAndGlyphs">0</text>
<rect x="267.5" y="511.5" width="37" height="28" fill="#1d1d1d" stroke="#323232" stroke-width="1.2" rx="3"/>
<path d="M276.5 522.5 L280 522.5 Q282 522.5 285 525.2 Q288 528 290 528 L294.5 528" stroke="#e6e6e6" stroke-width="2.6" fill="none" stroke-linecap="round"/>
<rect x="267.5" y="544.5" width="37" height="27" fill="#1b1b1b" stroke="#303030" stroke-width="1.2" rx="3"/>
<text x="286.0" y="563.7" font-size="14.8" fill="#4a8ce0" text-anchor="middle" font-weight="bold">L</text>
<line x1="330" y1="446" x2="330" y2="604" stroke="#343434" stroke-width="1.5"/>
<text x="389" y="464.7" font-size="14" fill="#a8a8a8" stroke="#a8a8a8" stroke-width="0.35" textLength="17" lengthAdjust="spacingAndGlyphs">Hz</text>
<text x="369.3" y="464.7" font-size="14" fill="#4a8ce0" stroke="#4a8ce0" stroke-width="0.35" textLength="16.4" lengthAdjust="spacingAndGlyphs">50</text>
<text x="389" y="496.9" font-size="14" fill="#a8a8a8" stroke="#a8a8a8" stroke-width="0.35" textLength="17" lengthAdjust="spacingAndGlyphs">dB</text>
<text x="377.7" y="496.9" font-size="14" fill="#4a8ce0" stroke="#4a8ce0" stroke-width="0.35" textLength="8" lengthAdjust="spacingAndGlyphs">0</text>
<text x="381" y="529.2" font-size="14" fill="#4a8ce0" text-anchor="middle" textLength="8.2" lengthAdjust="spacingAndGlyphs" font-weight="bold">2</text>
<rect x="353.5" y="544.5" width="37" height="27" fill="#1b1b1b" stroke="#303030" stroke-width="1.2" rx="3"/>
<text x="372.0" y="563.7" font-size="14.8" fill="#4a8ce0" text-anchor="middle" font-weight="bold">1</text>
<line x1="416" y1="446" x2="416" y2="604" stroke="#343434" stroke-width="1.5"/>
<text x="475" y="464.7" font-size="14" fill="#a8a8a8" stroke="#a8a8a8" stroke-width="0.35" textLength="17" lengthAdjust="spacingAndGlyphs">Hz</text>
<text x="447.09999999999997" y="464.7" font-size="14" fill="#4a8ce0" stroke="#4a8ce0" stroke-width="0.35" textLength="24.6" lengthAdjust="spacingAndGlyphs">200</text>
<text x="475" y="496.9" font-size="14" fill="#a8a8a8" stroke="#a8a8a8" stroke-width="0.35" textLength="17" lengthAdjust="spacingAndGlyphs">dB</text>
<text x="463.7" y="496.9" font-size="14" fill="#4a8ce0" stroke="#4a8ce0" stroke-width="0.35" textLength="8" lengthAdjust="spacingAndGlyphs">0</text>
<text x="467" y="529.2" font-size="14" fill="#4a8ce0" text-anchor="middle" textLength="8.2" lengthAdjust="spacingAndGlyphs" font-weight="bold">2</text>
<rect x="439.5" y="544.5" width="37" height="27" fill="#1b1b1b" stroke="#303030" stroke-width="1.2" rx="3"/>
<text x="458.0" y="563.7" font-size="14.8" fill="#4a8ce0" text-anchor="middle" font-weight="bold">2</text>
<line x1="502" y1="446" x2="502" y2="604" stroke="#343434" stroke-width="1.5"/>
<text x="561" y="464.7" font-size="14" fill="#a8a8a8" stroke="#a8a8a8" stroke-width="0.35" textLength="17" lengthAdjust="spacingAndGlyphs">Hz</text>
<text x="533.1" y="464.7" font-size="14" fill="#4a8ce0" stroke="#4a8ce0" stroke-width="0.35" textLength="24.6" lengthAdjust="spacingAndGlyphs">800</text>
<text x="561" y="496.9" font-size="14" fill="#a8a8a8" stroke="#a8a8a8" stroke-width="0.35" textLength="17" lengthAdjust="spacingAndGlyphs">dB</text>
<text x="549.7" y="496.9" font-size="14" fill="#4a8ce0" stroke="#4a8ce0" stroke-width="0.35" textLength="8" lengthAdjust="spacingAndGlyphs">0</text>
<text x="553" y="529.2" font-size="14" fill="#4a8ce0" text-anchor="middle" textLength="8.2" lengthAdjust="spacingAndGlyphs" font-weight="bold">2</text>
<rect x="525.5" y="544.5" width="37" height="27" fill="#1b1b1b" stroke="#303030" stroke-width="1.2" rx="3"/>
<text x="544.0" y="563.7" font-size="14.8" fill="#4a8ce0" text-anchor="middle" font-weight="bold">3</text>
<line x1="588" y1="446" x2="588" y2="604" stroke="#343434" stroke-width="1.5"/>
<text x="647" y="464.7" font-size="14" fill="#a8a8a8" stroke="#a8a8a8" stroke-width="0.35" textLength="17" lengthAdjust="spacingAndGlyphs">Hz</text>
<text x="610.9000000000001" y="464.7" font-size="14" fill="#4a8ce0" stroke="#4a8ce0" stroke-width="0.35" textLength="32.8" lengthAdjust="spacingAndGlyphs">3200</text>
<text x="647" y="496.9" font-size="14" fill="#a8a8a8" stroke="#a8a8a8" stroke-width="0.35" textLength="17" lengthAdjust="spacingAndGlyphs">dB</text>
<text x="635.7" y="496.9" font-size="14" fill="#4a8ce0" stroke="#4a8ce0" stroke-width="0.35" textLength="8" lengthAdjust="spacingAndGlyphs">0</text>
<text x="639" y="529.2" font-size="14" fill="#4a8ce0" text-anchor="middle" textLength="8.2" lengthAdjust="spacingAndGlyphs" font-weight="bold">2</text>
<rect x="611.5" y="544.5" width="37" height="27" fill="#1b1b1b" stroke="#303030" stroke-width="1.2" rx="3"/>
<text x="630.0" y="563.7" font-size="14.8" fill="#4a8ce0" text-anchor="middle" font-weight="bold">4</text>
<line x1="674" y1="446" x2="674" y2="604" stroke="#343434" stroke-width="1.5"/>
<text x="733" y="464.7" font-size="14" fill="#a8a8a8" stroke="#a8a8a8" stroke-width="0.35" textLength="17" lengthAdjust="spacingAndGlyphs">Hz</text>
<text x="688.7" y="464.7" font-size="14" fill="#4a8ce0" stroke="#4a8ce0" stroke-width="0.35" textLength="41" lengthAdjust="spacingAndGlyphs">12800</text>
<text x="733" y="496.9" font-size="14" fill="#a8a8a8" stroke="#a8a8a8" stroke-width="0.35" textLength="17" lengthAdjust="spacingAndGlyphs">dB</text>
<text x="721.7" y="496.9" font-size="14" fill="#4a8ce0" stroke="#4a8ce0" stroke-width="0.35" textLength="8" lengthAdjust="spacingAndGlyphs">0</text>
<text x="725" y="529.2" font-size="14" fill="#4a8ce0" text-anchor="middle" textLength="8.2" lengthAdjust="spacingAndGlyphs" font-weight="bold">2</text>
<rect x="697.5" y="544.5" width="37" height="27" fill="#1b1b1b" stroke="#303030" stroke-width="1.2" rx="3"/>
<text x="716.0" y="563.7" font-size="14.8" fill="#4a8ce0" text-anchor="middle" font-weight="bold">5</text>
<line x1="760" y1="446" x2="760" y2="604" stroke="#343434" stroke-width="1.5"/>
<text x="819" y="464.7" font-size="14" fill="#a8a8a8" stroke="#a8a8a8" stroke-width="0.35" textLength="17" lengthAdjust="spacingAndGlyphs">Hz</text>
<text x="774.7" y="464.7" font-size="14" fill="#4a8ce0" stroke="#4a8ce0" stroke-width="0.35" textLength="41" lengthAdjust="spacingAndGlyphs">18000</text>
<text x="819" y="496.9" font-size="14" fill="#a8a8a8" stroke="#a8a8a8" stroke-width="0.35" textLength="17" lengthAdjust="spacingAndGlyphs">dB</text>
<text x="807.7" y="496.9" font-size="14" fill="#4a8ce0" stroke="#4a8ce0" stroke-width="0.35" textLength="8" lengthAdjust="spacingAndGlyphs">0</text>
<rect x="783.5" y="511.5" width="37" height="28" fill="#1d1d1d" stroke="#323232" stroke-width="1.2" rx="3"/>
<path d="M792.5 528 L796.5 528 Q798.5 528 801.5 525.2 Q804.5 522.5 806.5 522.5 L810 522.5" stroke="#e6e6e6" stroke-width="2.6" fill="none" stroke-linecap="round"/>
<rect x="783.5" y="544.5" width="37" height="27" fill="#1b1b1b" stroke="#303030" stroke-width="1.2" rx="3"/>
<text x="802.0" y="563.7" font-size="14.8" fill="#4a8ce0" text-anchor="middle" font-weight="bold">H</text>
<line x1="846" y1="446" x2="846" y2="604" stroke="#343434" stroke-width="1.5"/>
<text x="861" y="464.7" font-size="14" fill="#4a4a4a" stroke="#4a4a4a" stroke-width="0.35" textLength="61" lengthAdjust="spacingAndGlyphs">18000 Hz</text>
<rect x="855" y="478.5" width="114" height="27.5" fill="#292929" rx="3"/>
<text x="863.8" y="498.4" font-size="14" fill="#4a4a4a" stroke="#4a4a4a" stroke-width="0.35" textLength="62.8" lengthAdjust="spacingAndGlyphs">24dB/Oct</text>
<path d="M951.5 490 L956.5 495 L961.5 490" stroke="#4e4e4e" stroke-width="1.6" fill="none"/>
<rect x="890.5" y="544.5" width="41" height="28.5" fill="#1b1b1b" stroke="#303030" stroke-width="1.2" rx="3"/>
<text x="911.0" y="563.7" font-size="14.8" fill="#b8b8b8" stroke="#b8b8b8" stroke-width="0.35" text-anchor="middle" textLength="17.5" lengthAdjust="spacingAndGlyphs">LP</text>
<line x1="26" y1="625.8" x2="968" y2="625.8" stroke="#373737" stroke-width="2"/>
<text x="226.2" y="652.6" font-size="14" fill="#a6a6a6" stroke="#a6a6a6" stroke-width="0.35" textLength="61.8" lengthAdjust="spacingAndGlyphs">Constant:</text>
<circle cx="312.6" cy="647.2" r="7.8" fill="#a8a8a8"/>
<text x="325.2" y="652.6" font-size="14" fill="#a6a6a6" stroke="#a6a6a6" stroke-width="0.35" textLength="12" lengthAdjust="spacingAndGlyphs">Q</text>
<circle cx="360.7" cy="647.5" r="7.5" fill="none" stroke="#acacac" stroke-width="2.5"/>
<text x="373.8" y="652.6" font-size="14" fill="#a6a6a6" stroke="#a6a6a6" stroke-width="0.35" textLength="39" lengthAdjust="spacingAndGlyphs">Width</text>
<line x1="428.8" y1="636" x2="428.8" y2="658" stroke="#3a3a3a" stroke-width="1.5"/>
<rect x="444.8" y="638.5" width="17" height="16.5" fill="none" stroke="#a8a8a8" stroke-width="2" rx="1.5"/>
<text x="466.8" y="652.6" font-size="14" fill="#a6a6a6" stroke="#a6a6a6" stroke-width="0.35" textLength="73.5" lengthAdjust="spacingAndGlyphs">Ultra-Quiet</text>
<line x1="557" y1="636" x2="557" y2="658" stroke="#3a3a3a" stroke-width="1.5"/>
<text x="571.8" y="652.6" font-size="14" fill="#a6a6a6" stroke="#a6a6a6" stroke-width="0.35" textLength="44.2" lengthAdjust="spacingAndGlyphs">Range:</text>
<circle cx="640.3" cy="647.2" r="7.8" fill="#a8a8a8"/>
<text x="653.6" y="652.6" font-size="14" fill="#a6a6a6" stroke="#a6a6a6" stroke-width="0.35" textLength="37.8" lengthAdjust="spacingAndGlyphs">30 dB</text>
<circle cx="715" cy="647.5" r="7.5" fill="none" stroke="#acacac" stroke-width="2.5"/>
<text x="728.4" y="652.6" font-size="14" fill="#a6a6a6" stroke="#a6a6a6" stroke-width="0.35" textLength="37.8" lengthAdjust="spacingAndGlyphs">96 dB</text>
<line x1="19.5" y1="700.3" x2="986" y2="700.3" stroke="#373737" stroke-width="2"/>
<rect x="19" y="712.8" width="23" height="24.5" fill="#37a270" rx="3"/>
<path d="M26.2 720.6 A6.9 6.9 0 1 0 35.2 720.6" stroke="#a8e2c2" stroke-width="1.7" fill="none"/><line x1="30.7" y1="717.3" x2="30.7" y2="725" stroke="#a8e2c2" stroke-width="1.7"/>
<text x="815" y="731" font-size="14" fill="#a6a6a6" stroke="#a6a6a6" stroke-width="0.35" textLength="98.3" lengthAdjust="spacingAndGlyphs">Track: Jota - B2</text>
<line x1="925.2" y1="716" x2="925.2" y2="740" stroke="#3a3a3a" stroke-width="1.5"/>
<text x="933.8" y="731" font-size="14" fill="#a6a6a6" stroke="#a6a6a6" stroke-width="0.35" textLength="37.5" lengthAdjust="spacingAndGlyphs">Slot 3</text>
</svg>
</body></html>
